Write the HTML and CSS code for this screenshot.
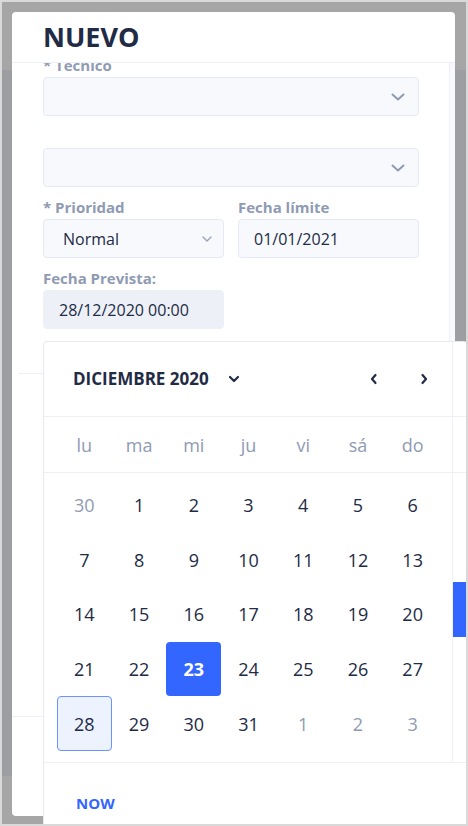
FILE: index.html
```html
<!DOCTYPE html>
<html lang="es">
<head>
    <meta charset="UTF-8">
    <meta name="viewport" content="width=device-width, initial-scale=1.0">
    <title>Nuevo</title>
    <link rel="stylesheet" href="styles.css">
</head>
<body>

<div class="screen">
    <div class="page">
        <div class="page-band"></div>
    </div>

    <section class="modal">
        <header class="modal-head">NUEVO</header>
        <div class="modal-body">
            <div class="modal-content">
                <div class="field">
                    <label>* Tecnico</label>
                    <div class="select">
                        <span></span>
                        <svg width="14" height="8" viewBox="0 0 14 8"><path d="M1.5 1.5L7 6.5l5.5-5" fill="none" stroke="#8f9bb3" stroke-width="2" stroke-linecap="round" stroke-linejoin="round"/></svg>
                    </div>
                </div>
                <div class="field">
                    <label>&nbsp;</label>
                    <div class="select">
                        <span></span>
                        <svg width="14" height="8" viewBox="0 0 14 8"><path d="M1.5 1.5L7 6.5l5.5-5" fill="none" stroke="#8f9bb3" stroke-width="2" stroke-linecap="round" stroke-linejoin="round"/></svg>
                    </div>
                </div>
                <div class="row">
                    <div class="field">
                        <label>* Prioridad</label>
                        <div class="select select-native">
                            <span>Normal</span>
                            <svg width="10" height="6" viewBox="0 0 10 6"><path d="M1 1l4 4 4-4" fill="none" stroke="#9aa4ba" stroke-width="1.4" stroke-linecap="round" stroke-linejoin="round"/></svg>
                        </div>
                    </div>
                    <div class="field">
                        <label>Fecha límite</label>
                        <div class="input">01/01/2021</div>
                    </div>
                </div>
                <div class="row">
                    <div class="field">
                        <label>Fecha Prevista:</label>
                        <div class="input input-active">28/12/2020 00:00</div>
                    </div>
                </div>
                <div class="divider divider-top"></div>
                <div class="divider divider-bottom"></div>
            </div>
            <div class="modal-track"></div>
        </div>
    </section>

    <div class="picker">
        <div class="picker-main">
            <div class="cal">
                <div class="cal-head">
                    <span class="cal-title">DICIEMBRE 2020</span>
                    <svg class="cal-title-arrow" width="12" height="8" viewBox="0 0 12 8"><path d="M2 2l4 4 4-4" fill="none" stroke="#222b45" stroke-width="2.2" stroke-linecap="round" stroke-linejoin="round"/></svg>
                    <span class="cal-spacer"></span>
                    <button class="cal-nav"><svg width="8" height="12" viewBox="0 0 8 12"><path d="M5.5 2L2 6l3.5 4" fill="none" stroke="#222b45" stroke-width="2.2" stroke-linecap="round" stroke-linejoin="round"/></svg></button>
                    <button class="cal-nav"><svg width="8" height="12" viewBox="0 0 8 12"><path d="M2.5 2L6 6l-3.5 4" fill="none" stroke="#222b45" stroke-width="2.2" stroke-linecap="round" stroke-linejoin="round"/></svg></button>
                </div>
                <div class="cal-week">
                    <span>lu</span><span>ma</span><span>mi</span><span>ju</span><span>vi</span><span>sá</span><span>do</span>
                </div>
                <div class="cal-days">
                    <span class="day muted">30</span><span class="day">1</span><span class="day">2</span><span class="day">3</span><span class="day">4</span><span class="day">5</span><span class="day">6</span>
                    <span class="day">7</span><span class="day">8</span><span class="day">9</span><span class="day">10</span><span class="day">11</span><span class="day">12</span><span class="day">13</span>
                    <span class="day">14</span><span class="day">15</span><span class="day">16</span><span class="day">17</span><span class="day">18</span><span class="day">19</span><span class="day">20</span>
                    <span class="day">21</span><span class="day">22</span><span class="day selected">23</span><span class="day">24</span><span class="day">25</span><span class="day">26</span><span class="day">27</span>
                    <span class="day current">28</span><span class="day">29</span><span class="day">30</span><span class="day">31</span><span class="day muted">1</span><span class="day muted">2</span><span class="day muted">3</span>
                </div>
            </div>
            <div class="time">
                <div class="time-head"></div>
                <div class="time-week"></div>
                <div class="time-item"></div>
                <div class="time-item"></div>
                <div class="time-item active"></div>
                <div class="time-item"></div>
            </div>
        </div>
        <div class="picker-foot">
            <a href="#" class="btn-now">NOW</a>
        </div>
    </div>
</div>

</body>
</html>
```

FILE: styles.css
```css
* { box-sizing: border-box; }
body { margin: 0; font-family: "Open Sans", "Noto Sans", sans-serif; color: #222b45; }

.screen { position: relative; width: 468px; height: 826px; border: 2px solid #d9d9d9; background-color: #a6a6a6; overflow: hidden; }
.page { padding-top: 68px; }
.page-band { height: 706px; background-color: #9c9ea2; }

.modal { position: absolute; left: 10px; top: 10px; width: 443px; height: 804px; background-color: white; border-radius: 4px; display: flex; flex-direction: column; overflow: hidden; }
.modal-head { height: 51px; padding: 8px 31px; line-height: 34px; font-size: 27px; font-weight: 700; color: #222b45; border-bottom: 1px solid #edf1f7; }
.modal-body { flex: 1; display: flex; overflow: hidden; }
.modal-content { flex: 1; padding: 0 30px 0 31px; margin-top: -18px; }
.modal-track { width: 6px; background-color: #f7f9fc; border-left: 1px solid #edf1f7; }

.field { margin-top: 10px; }
.field label { display: block; font-size: 15px; font-weight: 700; line-height: 20px; color: #8f9bb3; margin-bottom: 2px; }
.row { display: grid; grid-template-columns: 1fr 1fr; gap: 14px; }

.select, .input { height: 39px; display: flex; align-items: center; border: 1px solid #e4e9f2; background-color: #f7f9fc; border-radius: 4px; font-size: 16px; color: #222b45; }
.select { justify-content: space-between; padding: 0 13px 0 19px; }
.select-native { padding-right: 11px; }
.input { padding: 0 15px; }
.input-active { background-color: #edf1f7; border-color: #edf1f7; }

.divider { border-top: 1px solid #edf1f7; }
.divider-top { margin: 44px 0 0 -25px; height: 343px; }
.divider-bottom { margin-left: -31px; }

.picker { position: absolute; left: 41px; top: 339px; width: 425px; height: 500px; background-color: white; border: 1px solid #e4e9f2; border-radius: 4px; }
.picker-main { display: flex; }
.cal { width: 409px; border-right: 1px solid #edf1f7; }
.cal-head { height: 75px; display: flex; align-items: center; padding: 0 15px 0 29px; border-bottom: 1px solid #edf1f7; }
.cal-title { font-size: 17px; font-weight: 700; line-height: 24px; color: #222b45; }
.cal-title-arrow { margin-left: 19px; }
.cal-spacer { flex: 1; }
.cal-nav { width: 26px; height: 26px; padding: 0; border: none; background: none; display: flex; align-items: center; justify-content: center; }
.cal-nav + .cal-nav { margin-left: 24px; }

.cal-week { height: 56px; display: grid; grid-template-columns: repeat(7, 1fr); align-items: center; padding: 0 12px 0 13px; border-bottom: 1px solid #edf1f7; font-size: 18px; color: #8f9bb3; text-align: center; }
.cal-days { display: grid; grid-template-columns: repeat(7, 1fr); grid-auto-rows: 54.6px; padding: 5px 12px 11px 13px; }
.day { display: flex; align-items: center; justify-content: center; font-size: 18px; color: #222b45; border-radius: 4px; }
.day.muted { color: #8f9bb3; }
.day.selected { background-color: #3366ff; color: white; font-weight: 700; }
.day.current { background-color: #edf2ff; border: 1px solid #6b93ff; }

.time { flex: 1; overflow: hidden; }
.time-head { height: 75px; border-bottom: 1px solid #edf1f7; }
.time-week { height: 56px; border-bottom: 1px solid #edf1f7; }
.time-item { height: 54.5px; }
.time-item.active { background-color: #3366ff; }

.picker-foot { border-top: 1px solid #edf1f7; padding: 29px 32px; }
.btn-now { font-size: 15px; font-weight: 700; line-height: 20px; color: #3366ff; text-decoration: none; }
```
